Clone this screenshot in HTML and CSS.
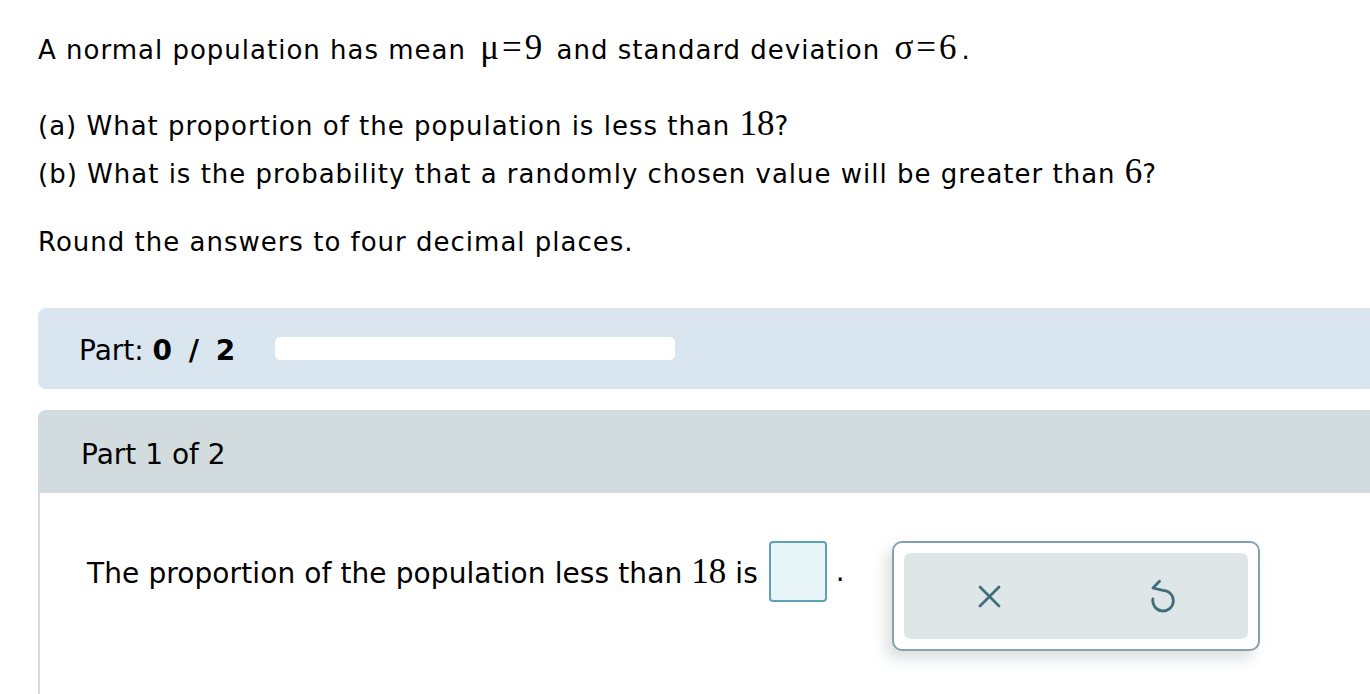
FILE: index.html
```html
<!DOCTYPE html>
<html lang="en">
<head>
    <meta charset="UTF-8">
    <title>Normal Population Question</title>
    <link rel="stylesheet" href="styles.css">
</head>
<body>
    <div class="question">
        <p class="line first">A normal population has mean <span class="math expr">μ<span class="rel">=</span>9</span> and standard deviation <span class="math expr">σ<span class="rel">=</span>6</span>.</p>
        <p class="line gap-a">(a) What proportion of the population is less than <span class="math">18</span>?</p>
        <p class="line">(b) What is the probability that a randomly chosen value will be greater than <span class="math">6</span>?</p>
        <p class="line gap-round">Round the answers to four decimal places.</p>
    </div>

    <div class="progress">
        <div class="progress-label">Part: <b class="count">0 / 2</b></div>
        <div class="progress-track"></div>
    </div>

    <div class="part">
        <div class="part-title">Part 1 of 2</div>
        <div class="part-body">
            <div class="answer-row">
                <span class="sentence">The proportion of the population less than <span class="math">18</span> is</span>
                <span class="answer-box"></span>
                <span class="period">.</span>
            </div>
            <div class="tools">
                <div class="tools-inner">
                    <button class="tool" title="Clear">
                        <svg width="23" height="23" viewBox="0 0 23 23">
                            <path d="M2 2 L21 21 M21 2 L2 21" stroke="#3f6f7b" stroke-width="2.8" stroke-linecap="round" fill="none"/>
                        </svg>
                    </button>
                    <button class="tool" title="Undo">
                        <svg width="26" height="34" viewBox="0 0 26 34">
                            <path d="M10.5 2.2 L4 9 L14 11.4 A10.3 10.3 0 1 1 3.9 19.9" stroke="#3f6f7b" stroke-width="2.8" stroke-linecap="round" stroke-linejoin="round" fill="none"/>
                        </svg>
                    </button>
                </div>
            </div>
        </div>
    </div>
</body>
</html>
```

FILE: styles.css
```css
body {
    margin: 0;
    padding: 0 0 0 38px;
    font-family: "DejaVu Sans", Verdana, sans-serif;
    color: #000;
    background: #fff;
    overflow: hidden;
}
.question {
    padding-top: 26px;
}
.line {
    margin: 0;
    height: 48px;
    font-size: 26px;
    line-height: 48px;
    letter-spacing: 1px;
}
.gap-a {
    margin-top: 28px;
}
.gap-round {
    margin-top: 20px;
}
.math {
    font-family: "Liberation Serif", "Times New Roman", serif;
    font-size: 35px;
    line-height: 1;
    letter-spacing: 0;
}
.expr {
    margin: 0 5px;
}
.rel {
    margin: 0 3px;
}
.progress {
    margin-top: 42px;
    height: 81px;
    background-color: #d9e6ef;
    border-radius: 8px 0 0 8px;
    display: flex;
    align-items: center;
    padding-left: 41px;
}
.progress-label {
    font-size: 28px;
    width: 196px;
    padding-top: 4px;
}
.count {
    word-spacing: 7px;
}
.progress-track {
    width: 400px;
    height: 23px;
    background: #fff;
    border-radius: 5px;
}
.part {
    margin-top: 21px;
}
.part-title {
    height: 83px;
    box-sizing: border-box;
    background-color: #d2dcdf;
    border-radius: 8px 0 0 0;
    display: flex;
    align-items: center;
    padding: 5px 0 0 43px;
    font-size: 28px;
}
.part-body {
    border-left: 2px solid #d2dcdf;
    padding: 48px 0 60px 47px;
    display: flex;
    align-items: flex-start;
}
.answer-row {
    display: flex;
    align-items: center;
    height: 61px;
    font-size: 28px;
    letter-spacing: 0.1px;
}
.answer-box {
    width: 54px;
    height: 57px;
    border: 2px solid #5ea3b1;
    border-radius: 4px;
    background: #e7f4f8;
    margin-left: 11px;
}
.period {
    margin-left: 9px;
}
.tools {
    margin-left: 47px;
    width: 344px;
    height: 86px;
    padding: 10px;
    border: 2px solid #86a2a9;
    border-radius: 10px;
    background: #fff;
    box-shadow: -6px 8px 14px rgba(60, 80, 90, 0.18);
}
.tools-inner {
    height: 100%;
    background: #dfe6e8;
    border-radius: 7px;
    display: flex;
    align-items: center;
}
.tool {
    flex: 1;
    height: 100%;
    border: none;
    background: transparent;
    display: flex;
    align-items: center;
    justify-content: center;
    padding: 0;
}
```
